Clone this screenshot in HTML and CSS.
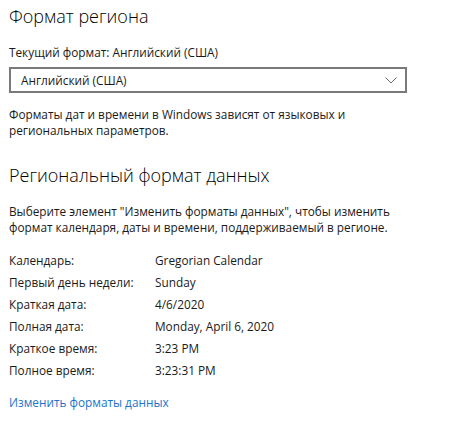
FILE: index.html
```html
<!DOCTYPE html>
<html lang="ru">
<head>
<meta charset="utf-8">
<link rel="stylesheet" href="styles.css">
</head>
<body>
<div class="page">
  <h1 class="title">Формат региона</h1>
  <div class="label">Текущий формат: Английский (США)</div>
  <div class="select">
    <span>Английский (США)</span>
    <svg class="chev" width="12" height="7" viewBox="0 0 12 7"><path d="M0.5 0.5 L6 6 L11.5 0.5" fill="none" stroke="#666" stroke-width="1"/></svg>
  </div>
  <p class="text">Форматы дат и времени в Windows зависят от языковых и региональных параметров.</p>
  <h2 class="title title2">Региональный формат данных</h2>
  <p class="text">Выберите элемент "Изменить форматы данных", чтобы изменить формат календаря, даты и времени, поддерживаемый в регионе.</p>
  <div class="grid">
    <div>Календарь:</div><div>Gregorian Calendar</div>
    <div>Первый день недели:</div><div>Sunday</div>
    <div>Краткая дата:</div><div>4/6/2020</div>
    <div>Полная дата:</div><div>Monday, April 6, 2020</div>
    <div>Краткое время:</div><div>3:23 PM</div>
    <div>Полное время:</div><div>3:23:31 PM</div>
  </div>
  <a class="link" href="#">Изменить форматы данных</a>
</div>
</body>
</html>
```
FILE: styles.css
```css
html, body { margin: 0; padding: 0; background: #fff; }
body { font-family: "Open Sans", "Noto Sans", sans-serif; color: #1a1a1a; font-size: 11.8px; }
.page { padding: 3px 10px 0 9px; }
.title { font-size: 18px; font-weight: 300; margin: 0; line-height: 26px; color: #000; }
.label { margin-top: 14px; line-height: 18px; }
.select { margin-top: 6px; height: 22px; border: 2px solid #7a7a7a; display: flex; align-items: center; justify-content: space-between; padding: 0 8px 0 10px; box-sizing: content-box; width: 376px; }
.chev { display: block; }
.text { margin: 13px 0 0 0; line-height: 16px; width: 400px; }
.title2 { margin-top: 24px; }
.title2 + .text { margin-top: 15px; }
.grid { display: grid; grid-template-columns: 146px auto; margin-top: 14px; line-height: 22px; }
.link { display: block; margin-top: 12px; color: #1b74cc; text-decoration: none; line-height: 18px; }
```
